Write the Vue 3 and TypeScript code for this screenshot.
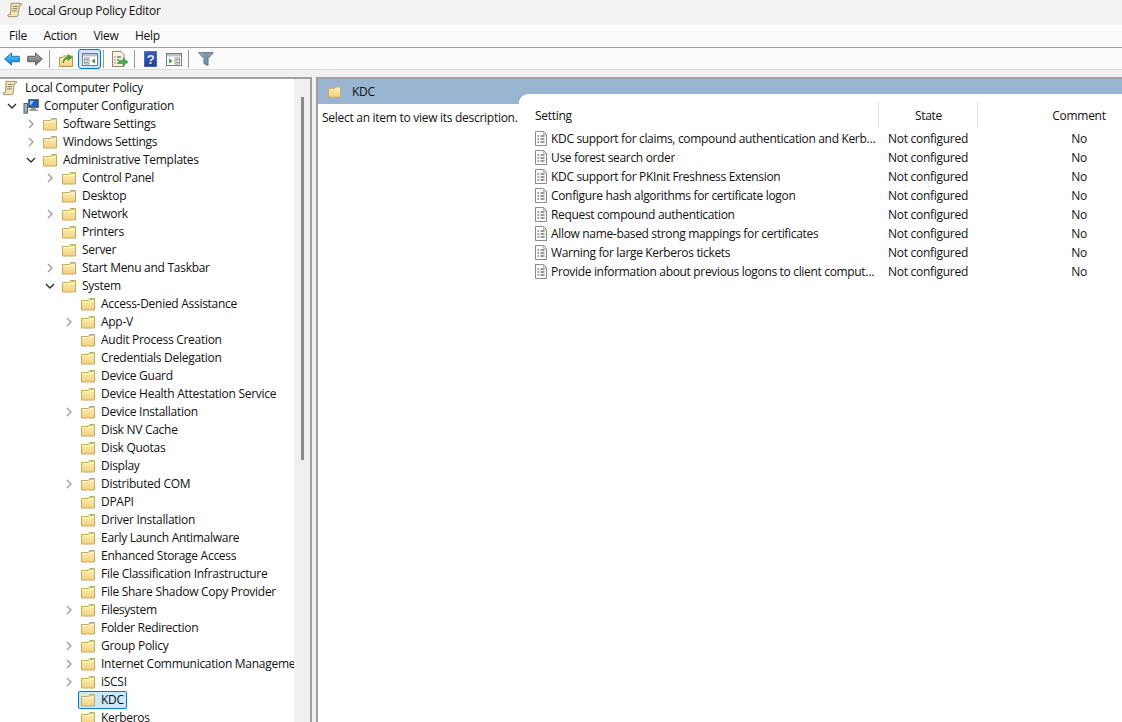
<script setup lang="ts">
interface TreeRow { label: string; level: number; arrow?: 'open' | 'closed'; icon?: 'scroll' | 'computer'; selected?: boolean }

const sys: [string, boolean][] = [
  ['Access-Denied Assistance', false], ['App-V', true], ['Audit Process Creation', false],
  ['Credentials Delegation', false], ['Device Guard', false], ['Device Health Attestation Service', false],
  ['Device Installation', true], ['Disk NV Cache', false], ['Disk Quotas', false], ['Display', false],
  ['Distributed COM', true], ['DPAPI', false], ['Driver Installation', false], ['Early Launch Antimalware', false],
  ['Enhanced Storage Access', false], ['File Classification Infrastructure', false],
  ['File Share Shadow Copy Provider', false], ['Filesystem', true], ['Folder Redirection', false],
  ['Group Policy', true], ['Internet Communication Management', true], ['iSCSI', true]
]

const rows: TreeRow[] = [
  { label: 'Local Computer Policy', level: 0, icon: 'scroll' },
  { label: 'Computer Configuration', level: 1, arrow: 'open', icon: 'computer' },
  { label: 'Software Settings', level: 2, arrow: 'closed' },
  { label: 'Windows Settings', level: 2, arrow: 'closed' },
  { label: 'Administrative Templates', level: 2, arrow: 'open' },
  { label: 'Control Panel', level: 3, arrow: 'closed' },
  { label: 'Desktop', level: 3 },
  { label: 'Network', level: 3, arrow: 'closed' },
  { label: 'Printers', level: 3 },
  { label: 'Server', level: 3 },
  { label: 'Start Menu and Taskbar', level: 3, arrow: 'closed' },
  { label: 'System', level: 3, arrow: 'open' },
  ...sys.map(([label, more]): TreeRow => ({ label, level: 4, arrow: more ? 'closed' : undefined })),
  { label: 'KDC', level: 4, selected: true },
  { label: 'Kerberos', level: 4 }
]

const settings: string[] = [
  'KDC support for claims, compound authentication and Kerberos armoring',
  'Use forest search order',
  'KDC support for PKInit Freshness Extension',
  'Configure hash algorithms for certificate logon',
  'Request compound authentication',
  'Allow name-based strong mappings for certificates',
  'Warning for large Kerberos tickets',
  'Provide information about previous logons to client computers'
]

function indent(level: number): string {
  return `${Math.max(0, level - 1) * 19}px`
}
</script>

<template>
  <div class="app">
    <svg class="defs" aria-hidden="true">
      <defs>
        <linearGradient id="gFolder" x1="0" y1="0" x2="0" y2="1"><stop offset="0" stop-color="#fdeeb8"/><stop offset="1" stop-color="#f4d27f"/></linearGradient>
        <linearGradient id="gBlue" x1="0" y1="0" x2="0" y2="1"><stop offset="0" stop-color="#7cd0f8"/><stop offset=".55" stop-color="#2f9fe8"/><stop offset="1" stop-color="#1a78c8"/></linearGradient>
        <linearGradient id="gGray" x1="0" y1="0" x2="0" y2="1"><stop offset="0" stop-color="#b4b4b4"/><stop offset=".55" stop-color="#858585"/><stop offset="1" stop-color="#6a6a6a"/></linearGradient>
        <linearGradient id="gFunnel" x1="0" y1="0" x2="1" y2="0"><stop offset="0" stop-color="#a9c3d4"/><stop offset=".5" stop-color="#6f93aa"/><stop offset="1" stop-color="#9db5c4"/></linearGradient>
        <linearGradient id="gHelp" x1="0" y1="0" x2="0" y2="1"><stop offset="0" stop-color="#3a5fb8"/><stop offset="1" stop-color="#1f3f92"/></linearGradient>
        <g id="scrollIcon">
          <path d="M4.500 1.500h11c1 0 1.500 1 .5 2h-2l-1.500 11c-.3 1.500-1 2-2 2H2c-1 0-1.500-1.500-.5-2.500h2.500z" fill="#f5e6b8" stroke="#97875f"/>
          <path d="M6.500 5h5.500M6 7.500h5.500M5.700 10h5.500" stroke="#7d735a"/>
        </g>
      </defs>
    </svg>

    <header class="title">
      <svg class="title-icon" viewBox="0 0 18 18"><use href="#scrollIcon"/></svg>
      <span>Local Group Policy Editor</span>
    </header>

    <nav class="menu">
      <span>File</span><span>Action</span><span>View</span><span>Help</span>
    </nav>

    <div class="toolbar">
      <svg class="tool t-back" viewBox="0 0 16 14"><path d="M.7 7l6.800-6v3.300h7.800v5.400H7.500V13z" fill="url(#gBlue)" stroke="#1c72b8" stroke-linejoin="round"/></svg>
      <svg class="tool t-fwd" viewBox="0 0 16 14"><path d="M15.300 7l-6.800-6v3.300H.7v5.400h7.800V13z" fill="url(#gGray)" stroke="#5e5e5e" stroke-linejoin="round"/></svg>
      <i class="sep s1"></i>
      <svg class="tool t-up" viewBox="0 0 14 15"><path d="M.5 5.500h3l1-1.500h9v10.500H.5z" fill="url(#gFolder)" stroke="#b2934f"/><path d="M4 11c0-4 2.500-6 5-6V2.500L13 5.500 9 8.500V6.500c-2 0-3.800 1.700-5 4.500z" fill="#4fa83d" stroke="#2f7a25" stroke-width=".6"/></svg>
      <span class="tool-active">
        <svg viewBox="0 0 16 13" class="win"><rect x=".5" y=".5" width="15" height="12" fill="#fff" stroke="#7a7a7a"/><path d="M1 1h14v2.500H1z" fill="#b9c4cf"/><path d="M2.500 5h4.500v6H2.500z" fill="#fff" stroke="#7a7a7a" stroke-width=".8"/><path d="M3.500 6.500h2.500M3.500 8h2.500M3.500 9.500h2.500" stroke="#555" stroke-width=".6"/><path d="M13 5.500v5l-3.500-2.500z" fill="#2e9d3c"/></svg>
      </span>
      <i class="sep s2"></i>
      <svg class="tool t-export" viewBox="0 0 16 16"><path d="M.5.500h8.500l3 3v12H.5z" fill="#f8f3df" stroke="#8d8672"/><path d="M2.500 6h1M5 6h4M2.500 9h1M5 9h2M2.500 12h1M5 12h2" stroke="#444"/><path d="M7 9.500h4V7l5 4-5 4v-2.500H7z" fill="#46b04a" stroke="#2d8533" stroke-width=".5"/></svg>
      <i class="sep s3"></i>
      <svg class="tool t-help" viewBox="0 0 13 16"><rect width="13" height="16" fill="url(#gHelp)"/><rect x=".5" y=".5" width="12" height="15" fill="none" stroke="#5f80cc" stroke-opacity=".6"/><text x="6.500" y="13" text-anchor="middle" class="help-q">?</text></svg>
      <svg class="tool t-props" viewBox="0 0 16 13"><rect x=".5" y=".5" width="15" height="12" fill="#fff" stroke="#7a7a7a"/><path d="M1 1h14v2.500H1z" fill="#b9c4cf"/><path d="M3 5.500v5l3.500-2.500z" fill="#2e9d3c"/><path d="M9 5h4.500v6H9z" fill="#fff" stroke="#7a7a7a" stroke-width=".8"/><path d="M10 6.500h2.500M10 8h2.500M10 9.500h2.500" stroke="#555" stroke-width=".6"/></svg>
      <i class="sep s4"></i>
      <svg class="tool t-filter" viewBox="0 0 16 14"><path d="M.7.700h14.600L10 6.500v7L6 11.500v-5z" fill="url(#gFunnel)" stroke="#5a6f7f"/></svg>
    </div>

    <div class="strip"></div>

    <main class="panes">
      <section class="tree-pane">
        <div class="tree">
          <div v-for="row in rows" :key="row.label" class="tree-row" :style="{ paddingLeft: indent(row.level) }">
            <span class="arrow">
              <svg v-if="row.arrow === 'closed'" viewBox="0 0 10 10"><path d="M3 1l4 4-4 4" fill="none" stroke="#9a9a9a" stroke-width="1.300"/></svg>
              <svg v-else-if="row.arrow === 'open'" viewBox="0 0 10 10"><path d="M1 3l4 4 4-4" fill="none" stroke="#2a2a2a" stroke-width="1.300"/></svg>
            </span>
            <span class="item" :class="{ selected: row.selected, root: row.level === 0 }">
              <svg v-if="row.icon === 'scroll'" class="ico" viewBox="0 0 18 18"><use href="#scrollIcon"/></svg>
              <svg v-else-if="row.icon === 'computer'" class="ico" viewBox="0 0 16 16"><rect x="5.500" y="1.500" width="10" height="8" fill="#1f5fbf" stroke="#6d6d6d"/><path d="M7 3h4l-3 4H7z" fill="#9ad0f5"/><path d="M8 10h5v1.500H15v1.500H6v-1.500h2z" fill="#9a9a9a"/><rect x="1" y="5.500" width="3.500" height="9.500" fill="#9fb4c6" stroke="#4d5a66"/><path d="M1.500 13.500l-1 2h5l-1-2" fill="#6f8aa0"/></svg>
              <svg v-else class="ico" viewBox="0 0 16 16"><path d="M1.500 4.500h7l1-2h5v11.500h-13z" fill="url(#gFolder)" stroke="#c6a862"/><path d="M9.800 3.500h3.800" stroke="#9cc6e0"/><path d="M2.500 5.500h11" stroke="#fff7d8"/></svg>
              <span class="label">{{ row.label }}</span>
            </span>
          </div>
        </div>
        <div class="scroll"><div class="thumb"></div></div>
      </section>

      <section class="detail-pane">
        <div class="banner">
          <svg class="banner-ico" viewBox="0 0 16 16"><path d="M1.500 4.500h7l1-2h5v11.500h-13z" fill="url(#gFolder)" stroke="#c6a862"/><path d="M9.800 3.500h3.800" stroke="#9cc6e0"/></svg>
          <span>KDC</span>
        </div>
        <div class="detail-body">
          <p class="desc">Select an item to view its description.</p>
          <div class="sheet">
            <div class="head">
              <span class="c1">Setting</span>
              <span class="c2">State</span>
              <span class="c3">Comment</span>
            </div>
            <div v-for="s in settings" :key="s" class="row">
              <span class="c1 cell">
                <svg class="doc" viewBox="0 0 12 15"><path d="M.5.500h8l3 3v11H.5z" fill="#fcfcfc" stroke="#8a8a8a"/><path d="M8.500.500v3h3" fill="none" stroke="#b5b5b5"/><path d="M2.500 5h1.500M5.500 5h4M2.500 8h1.500M5.500 8h4M2.500 11h1.500M5.500 11h4" stroke="#3a3a3a"/></svg>
                <span class="ellipsis">{{ s }}</span>
              </span>
              <span class="c2 state">Not configured</span>
              <span class="c3">No</span>
            </div>
          </div>
        </div>
      </section>
    </main>
  </div>
</template>

<style>
html, body { margin: 0; overflow: hidden; }
</style>

<style scoped>
.app {
  width: 1122px;
  height: 722px;
  display: flex;
  flex-direction: column;
  overflow: hidden;
  background: #f0f0f0;
  color: #111;
  font: 12px "Open Sans", "Noto Sans", sans-serif;
  letter-spacing: -0.28px;
}
.defs { width: 0; height: 0; position: absolute; }
.title {
  height: 25px;
  box-sizing: border-box;
  display: flex;
  align-items: center;
  gap: 5px;
  padding: 0 0 5px 7px;
  background: #f3f3f3;
}
.title-icon { width: 16px; height: 16px; }
.menu {
  height: 22px;
  box-sizing: border-box;
  display: flex;
  align-items: center;
  gap: 16.5px;
  padding: 0 0 2px 9px;
  background: #fbfbfb;
}
.toolbar {
  height: 23px;
  box-sizing: border-box;
  display: flex;
  align-items: center;
  padding: 1px 0 0 4px;
  background: #fbfbfb;
  border-top: 1px solid #a0a0a0;
  border-bottom: 1px solid #dcdcdc;
}
.tool { flex: none; }
.t-back { width: 16px; height: 14px; }
.t-fwd { width: 16px; height: 14px; margin-left: 7px; }
.s1 { margin-left: 6px; }
.t-up { width: 14px; height: 15px; margin-left: 9px; }
.tool-active {
  width: 23px;
  height: 20px;
  box-sizing: border-box;
  margin-left: 5px;
  display: flex;
  align-items: center;
  justify-content: center;
  background: #cce8ff;
  border: 1px solid #0078d4;
  border-radius: 3px;
}
.win { width: 16px; height: 13px; }
.s2 { margin-left: 2px; }
.t-export { width: 16px; height: 16px; margin-left: 8px; }
.s3 { margin-left: 6px; }
.t-help { width: 13px; height: 16px; margin-left: 9px; }
.help-q { font: bold 13px "Liberation Sans", sans-serif; fill: #e6eeff; }
.t-props { width: 16px; height: 13px; margin-left: 9px; }
.s4 { margin-left: 6px; }
.t-filter { width: 16px; height: 14px; margin-left: 9px; }
.sep { width: 1px; height: 18px; background: #9a9a9a; flex: none; }
.strip { height: 7px; background: #f0f0f0; }
.panes {
  flex: 1;
  min-height: 0;
  display: flex;
  gap: 4px;
}
.tree-pane {
  width: 312px;
  box-sizing: border-box;
  display: flex;
  background: #fff;
  border-top: 2px solid #a0a0a0;
  border-right: 2px solid #a0a0a0;
  overflow: hidden;
}
.tree {
  width: 294px;
  overflow: hidden;
  flex: none;
}
.tree-row {
  height: 18px;
  display: flex;
  align-items: center;
  white-space: nowrap;
}
.arrow {
  width: 10px;
  height: 10px;
  margin-left: 7px;
  margin-right: 4px;
  flex: none;
  display: flex;
}
.item {
  display: flex;
  align-items: center;
  gap: 5px;
  height: 16px;
  padding: 0 2px 0 1px;
  border: 1px solid transparent;
  border-radius: 2px;
}
.item.root { margin-left: -21px; gap: 7px; }
.selected { background: #cce8ff; border-color: #0078d4; }
.ico { width: 16px; height: 16px; flex: none; }
.label { line-height: 16px; }
.scroll {
  flex: 1;
  background: #f0f0f0;
  position: relative;
}
.thumb {
  position: absolute;
  left: 7px;
  top: 18px;
  width: 3px;
  height: 363px;
  background: #8a8a8a;
}
.detail-pane {
  flex: 1;
  min-width: 0;
  display: flex;
  flex-direction: column;
  background: #fff;
  border-top: 2px solid #a0a0a0;
  border-left: 2px solid #a0a0a0;
}
.banner {
  height: 25px;
  box-sizing: border-box;
  flex: none;
  display: flex;
  align-items: center;
  gap: 10px;
  padding: 0 0 1px 9px;
  background: #99b4d1;
}
.banner-ico { width: 15px; height: 15px; }
.detail-body {
  flex: 1;
  display: flex;
  min-height: 0;
}
.desc {
  margin: 5px 0 0 4px;
  width: 197px;
  flex: none;
  white-space: nowrap;
}
.sheet {
  flex: 1;
  min-width: 0;
  margin-top: -10px;
  padding-top: 8px;
  background: #fff;
  border-top-left-radius: 9px;
  overflow: hidden;
}
.head, .row {
  display: grid;
  grid-template-columns: 343px 100px 202px;
  padding-left: 16px;
}
.head {
  height: 26px;
  align-items: center;
  margin-bottom: 1px;
}
.head .c2, .head .c3 { text-align: center; }
.head .c2 {
  box-sizing: border-box;
  padding-left: 1px;
  border-left: 1px solid #e4e4e4;
  border-right: 1px solid #e4e4e4;
  height: 26px;
  line-height: 27px;
}
.row { height: 19px; align-items: center; }
.cell {
  display: flex;
  align-items: center;
  gap: 4px;
  min-width: 0;
}
.doc { width: 12px; height: 15px; flex: none; }
.ellipsis {
  overflow: hidden;
  text-overflow: ellipsis;
  white-space: nowrap;
  letter-spacing: -0.33px;
}
.state { padding-left: 10px; }
.row .c3 { text-align: center; }
</style>
